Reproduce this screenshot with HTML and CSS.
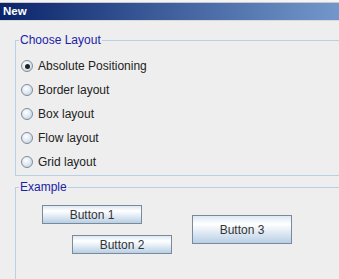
FILE: index.html
```html
<!DOCTYPE html>
<html>
<head>
<meta charset="utf-8">
<link rel="stylesheet" href="styles.css">
</head>
<body>
<div class="window">
  <div class="topedge"></div>
  <div class="titlebar">New</div>
  <div class="content">
    <fieldset class="group group-layout">
      <legend class="group-title">Choose Layout</legend>
      <div class="radios">
        <label class="radio-row"><span class="radio checked"></span><span class="radio-label">Absolute Positioning</span></label>
        <label class="radio-row"><span class="radio"></span><span class="radio-label">Border layout</span></label>
        <label class="radio-row"><span class="radio"></span><span class="radio-label">Box layout</span></label>
        <label class="radio-row"><span class="radio"></span><span class="radio-label">Flow layout</span></label>
        <label class="radio-row"><span class="radio"></span><span class="radio-label">Grid layout</span></label>
      </div>
    </fieldset>
    <fieldset class="group group-example">
      <legend class="group-title">Example</legend>
      <div class="canvas">
        <div class="btn btn1">Button 1</div>
        <div class="btn btn2">Button 2</div>
        <div class="btn btn3">Button 3</div>
      </div>
    </fieldset>
  </div>
</div>
</body>
</html>
```

FILE: styles.css
```css
html, body {
  margin: 0;
  padding: 0;
  width: 339px;
  height: 279px;
  overflow: hidden;
  background: #eeeeee;
}
.window {
  width: 339px;
  height: 279px;
  overflow: hidden;
  font-family: "Liberation Sans", Arial, sans-serif;
  font-size: 12px;
  color: #222222;
}
.topedge {
  height: 2px;
  background: #f4f4f4;
  border-bottom: 1px solid #c9c9c9;
}
.titlebar {
  height: 17px;
  line-height: 17px;
  padding-left: 3px;
  font-family: "Liberation Sans", Arial, sans-serif;
  font-weight: bold;
  font-size: 11.5px;
  color: #ffffff;
  background: linear-gradient(to right, #0a246a 0%, #3a5a98 45%, #7397cb 100%);
}
.content {
  border-top: 1px solid #d9d9d9;
  padding-left: 15px;
}
.group {
  margin: 0;
  padding: 0;
  width: 420px;
  border: 1px solid #b8cfe5;
  border-right: none;
  min-width: 0;
}
.group-layout {
  margin-top: 12px;
  padding-top: 7px;
  padding-bottom: 1px;
}
.group-example {
  margin-top: 4px;
  border-bottom: none;
}
.group-title {
  margin-left: 3px;
  padding: 0 1px;
  line-height: 14px;
  font-size: 12px;
  color: #1a22a8;
}
.radios {
  display: flex;
  flex-direction: column;
  padding-left: 5px;
}
.radio-row {
  display: flex;
  align-items: center;
  height: 24px;
  gap: 5px;
}
.radio {
  box-sizing: border-box;
  width: 12px;
  height: 12px;
  border-radius: 50%;
  border: 1px solid #7f8c99;
  background: radial-gradient(circle at 40% 35%, #ffffff 0%, #e3ebf3 45%, #b4c8dc 100%);
  display: flex;
  align-items: center;
  justify-content: center;
}
.radio.checked::after {
  content: "";
  width: 5px;
  height: 5px;
  border-radius: 50%;
  background: #222222;
}
.radio-label {
  line-height: 14px;
}
.canvas {
  position: relative;
  height: 90px;
}
.btn {
  position: absolute;
  box-sizing: border-box;
  width: 100px;
  border: 1px solid #7a8a99;
  background: linear-gradient(#dde8f3 0%, #ffffff 30%, #b8cfe5 100%);
  color: #333333;
  display: flex;
  align-items: center;
  justify-content: center;
  font-size: 12px;
}
.btn1 { left: 26px; top: 11px; height: 19px; }
.btn2 { left: 56px; top: 41px; height: 19px; }
.btn3 { left: 176px; top: 21px; height: 29px; }
```
